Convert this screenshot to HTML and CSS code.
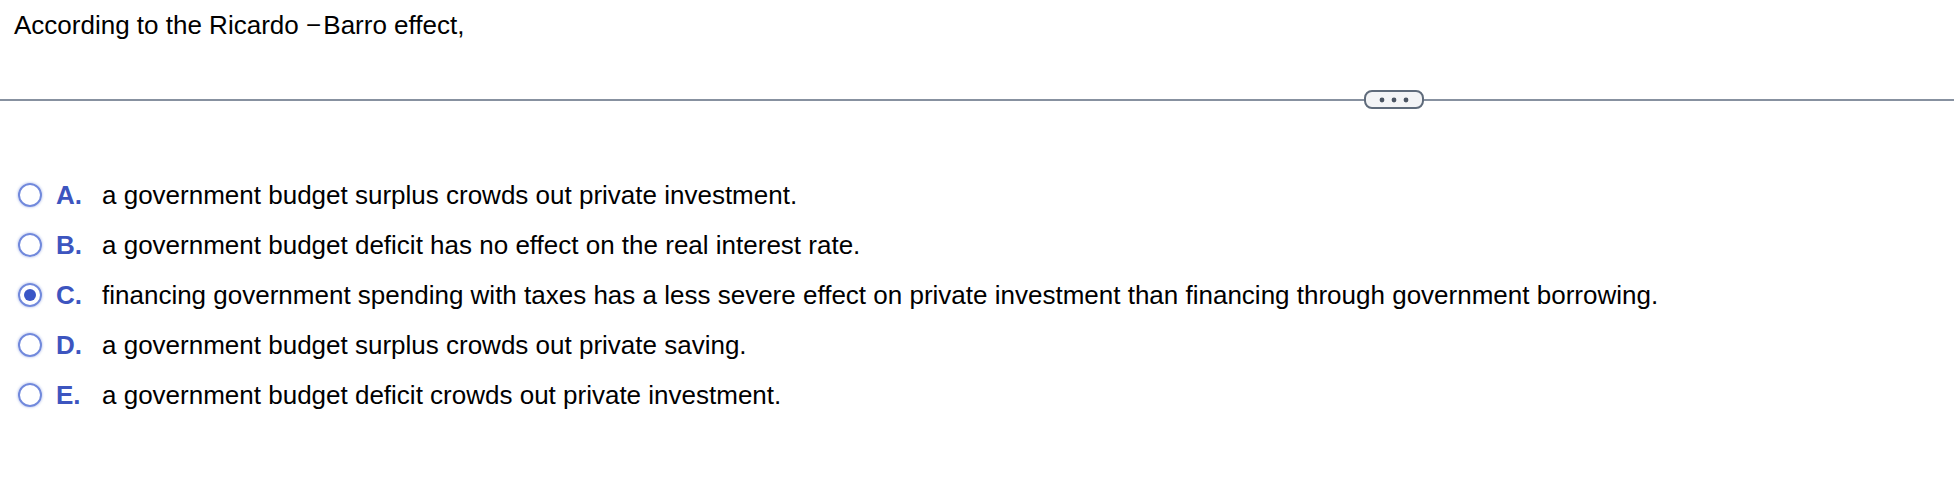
FILE: index.html
```html
<!DOCTYPE html>
<html lang="en">
<head>
    <meta charset="UTF-8">
    <meta name="viewport" content="width=device-width, initial-scale=1.0">
    <title>Ricardo - Barro effect</title>
    <link rel="stylesheet" href="styles.css">
</head>
<body>
    <div class="question">According to the Ricardo &minus;&#8202;Barro effect,</div>

    <div class="divider">
        <div class="rule rule-left"></div>
        <button class="more" aria-label="More">
            <svg width="32" height="6" viewBox="0 0 32 6">
                <circle cx="4" cy="3" r="2.4" fill="#4b5563"/>
                <circle cx="16" cy="3" r="2.4" fill="#4b5563"/>
                <circle cx="28" cy="3" r="2.4" fill="#4b5563"/>
            </svg>
        </button>
        <div class="rule"></div>
    </div>

    <ul class="choices">
        <li class="choice">
            <span class="radio"></span>
            <span class="letter">A.</span>
            <span class="text">a government budget surplus crowds out private investment.</span>
        </li>
        <li class="choice">
            <span class="radio"></span>
            <span class="letter">B.</span>
            <span class="text">a government budget deficit has no effect on the real interest rate.</span>
        </li>
        <li class="choice">
            <span class="radio checked"></span>
            <span class="letter">C.</span>
            <span class="text">financing government spending with taxes has a less severe effect on private investment than financing through government borrowing.</span>
        </li>
        <li class="choice">
            <span class="radio"></span>
            <span class="letter">D.</span>
            <span class="text">a government budget surplus crowds out private saving.</span>
        </li>
        <li class="choice">
            <span class="radio"></span>
            <span class="letter">E.</span>
            <span class="text">a government budget deficit crowds out private investment.</span>
        </li>
    </ul>
</body>
</html>
```

FILE: styles.css
```css
body {
    font-family: "Liberation Sans", Arial, sans-serif;
    background-color: #fff;
    margin: 0;
    color: #000;
    font-size: 26px;
}
.question {
    padding: 10px 0 0 14px;
    line-height: 30px;
}
.divider {
    display: flex;
    align-items: center;
    margin-top: 50px;
    height: 19px;
}
.rule {
    flex: 1;
    height: 2px;
    background-color: #8791a0;
}
.rule-left {
    flex: 0 0 1364px;
}
.more {
    width: 60px;
    height: 19px;
    padding: 0;
    box-sizing: border-box;
    border: 2px solid #5f6b7b;
    border-radius: 8px;
    background-color: #f3f4f6;
    display: flex;
    align-items: center;
    justify-content: center;
}
.more svg {
    display: block;
}
.choices {
    list-style: none;
    margin: 61px 0 0 0;
    padding: 0 0 0 18px;
}
.choice {
    display: flex;
    align-items: center;
    height: 50px;
}
.radio {
    width: 24px;
    height: 24px;
    box-sizing: border-box;
    border: 2px solid #7189dc;
    border-radius: 50%;
    box-shadow: 0 0 2px 1px rgba(113, 137, 220, 0.3);
    display: flex;
    align-items: center;
    justify-content: center;
    flex-shrink: 0;
}
.radio.checked::after {
    content: "";
    width: 12px;
    height: 12px;
    border-radius: 50%;
    background-color: #3a56c6;
}
.letter {
    color: #3d55bf;
    font-weight: bold;
    margin-left: 14px;
    width: 46px;
}
.text {
    white-space: nowrap;
}
```
